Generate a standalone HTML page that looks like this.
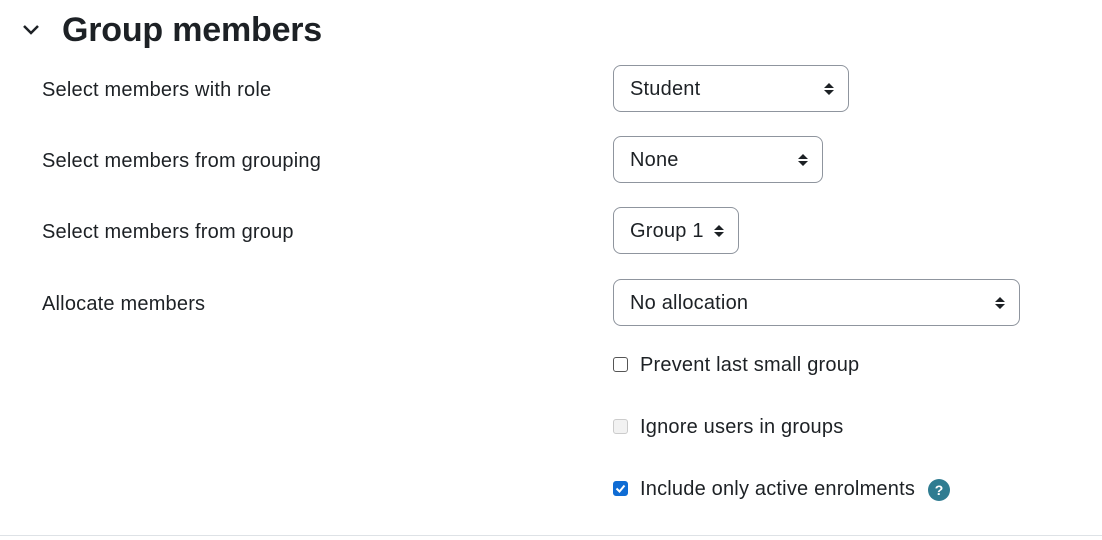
<!DOCTYPE html>
<html><head><style>
body{margin:0;width:1102px;height:540px;background:#fff;font-family:"Liberation Sans",sans-serif;color:#1d2125;position:relative;overflow:hidden}
.a{position:absolute}
h1{position:absolute;left:62px;top:11px;margin:0;font-size:34px;font-weight:bold;letter-spacing:-0.2px}
.lbl{position:absolute;left:42px;font-size:20px;letter-spacing:0.2px}
.sel{position:absolute;left:613px;height:45px;border:1px solid #8f959e;border-radius:8px;box-sizing:content-box;font-size:20px;letter-spacing:0.2px;line-height:47px;padding-left:16px}
.sel svg{position:absolute;right:14px;top:16px}
.cb{position:absolute;left:613px;width:13px;height:13px;border:1px solid #555;border-radius:3px}
.ct{position:absolute;left:640px;font-size:20px;letter-spacing:0.2px}
</style></head><body>
<svg class="a" style="left:21px;top:23px" width="20" height="14" viewBox="0 0 20 14"><path d="M3 3l7 7 7-7" fill="none" stroke="#1d2125" stroke-width="2.5"/></svg>
<h1>Group members</h1>
<div class="lbl" style="top:79px">Select members with role</div>
<div class="lbl" style="top:150px">Select members from grouping</div>
<div class="lbl" style="top:221px">Select members from group</div>
<div class="lbl" style="top:293px">Allocate members</div>
<div class="sel" style="top:65px;width:218px">Student<svg width="10" height="14"><path d="M0 6L5 1 10 6zM0 8L5 13 10 8z" fill="#1d2125"/></svg></div>
<div class="sel" style="top:136px;width:192px">None<svg width="10" height="14"><path d="M0 6L5 1 10 6zM0 8L5 13 10 8z" fill="#1d2125"/></svg></div>
<div class="sel" style="top:207px;width:108px">Group 1<svg width="10" height="14"><path d="M0 6L5 1 10 6zM0 8L5 13 10 8z" fill="#1d2125"/></svg></div>
<div class="sel" style="top:279px;width:389px">No allocation<svg width="10" height="14"><path d="M0 6L5 1 10 6zM0 8L5 13 10 8z" fill="#1d2125"/></svg></div>
<div class="cb" style="top:357px"></div><div class="ct" style="top:354px">Prevent last small group</div>
<div class="cb" style="top:419px;border-color:#ccc;background:#f2f2f2"></div><div class="ct" style="top:416px">Ignore users in groups</div>
<div class="cb" style="top:481px;background:#0f6cd4;border-color:#0f6cd4"><svg width="13" height="13" style="position:absolute;left:0;top:0"><path d="M2.5 6.5l3 3 5-6" fill="none" stroke="#fff" stroke-width="2"/></svg></div><div class="ct" style="top:478px">Include only active enrolments</div>
<div class="a" style="left:928px;top:479px;width:22px;height:22px;border-radius:50%;background:#2f7c91;color:#fff;font-weight:bold;font-size:14px;text-align:center;line-height:22px">?</div>
<div class="a" style="left:0;top:535px;width:1102px;height:1px;background:#dee2e6"></div>
</body></html>
